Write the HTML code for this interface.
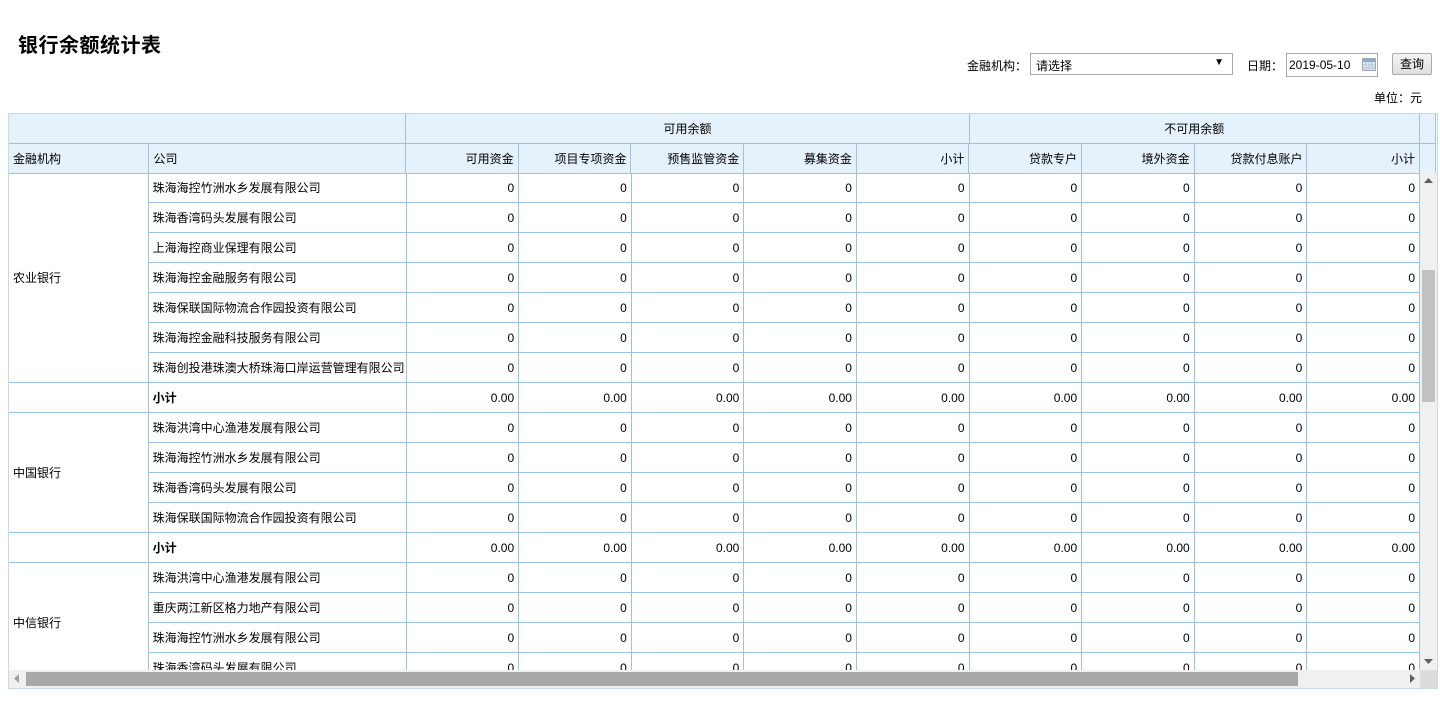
<!DOCTYPE html>
<html><head><meta charset="utf-8"><style>
*{margin:0;padding:0;box-sizing:border-box}
body{width:1440px;height:701px;background:#fff;font-family:"Liberation Sans","Noto Sans CJK SC",sans-serif;font-size:12px;color:#000;position:relative;overflow:hidden}
h1{position:absolute;left:18px;top:29px;font-size:20px;font-weight:bold;letter-spacing:0.5px}
.abs{position:absolute}
.sel{left:1030px;top:53px;width:203px;height:22px;border:1px solid #a9a9a9;padding:3px 5px;font-size:12px}
.sel span{position:absolute;right:8px;top:3px;font-size:10px}
.date{left:1286px;top:53px;width:92px;height:24px;border:1px solid #a9a9a9;padding:4px 2px}
.btn{left:1392px;top:53px;width:40px;height:22px;border:1px solid #adadad;background:linear-gradient(#f4f4f4,#dedede);text-align:center;line-height:20px;border-radius:2px}
.box{left:8px;top:113px;width:1430px;height:576px;border:1px solid #c5dbe8;overflow:hidden}
table{border-collapse:collapse;table-layout:fixed}
td{border:1px solid #9cc2e5;height:30px;padding:0 4px;white-space:nowrap;overflow:hidden}
.hd td{background:#e5f1fb}
.r{text-align:right}
.c{text-align:center}
.body{position:absolute;left:-1px;top:59px;width:1412px;height:497px;overflow:hidden}
.vs{position:absolute;left:1411px;top:59px;width:18px;height:497px;background:#f0f0f0}
.hs{position:absolute;left:0;top:556px;width:1428px;height:18px;background:#f0f0f0}
</style></head><body>
<h1>银行余额统计表</h1>
<div class="abs" style="left:967px;top:57px">金融机构：</div>
<div class="abs sel">请选择<span>▼</span></div>
<div class="abs" style="left:1247px;top:57px">日期：</div>
<div class="abs date">2019-05-10<svg class="abs" style="left:75px;top:4px" width="14" height="13"><rect x="0.5" y="0.5" width="13" height="12" fill="#dfe8f3" stroke="#9ab"/><rect x="1" y="1" width="12" height="3" fill="#8fa8c8"/><path d="M1 7H13M1 10H13M4 4V12M7 4V12M10 4V12" stroke="#b8c6d6"/></svg></div>
<div class="abs btn">查询</div>
<div class="abs" style="left:1374px;top:89px">单位：元</div>
<div class="abs box">
<table class="hd" style="position:absolute;left:-1px;top:-1px">
<colgroup><col style="width:399px"><col style="width:565px"><col style="width:452px"><col style="width:16px"></colgroup>
<tr><td></td><td class="c">可用余额</td><td class="c">不可用余额</td><td></td></tr>
</table>
<table class="hd" style="position:absolute;left:-1px;top:29px">
<colgroup><col style="width:141px"><col style="width:258px"><col style="width:113px"><col style="width:113px"><col style="width:113px"><col style="width:113px"><col style="width:113px"><col style="width:113px"><col style="width:113px"><col style="width:113px"><col style="width:113px"><col style="width:16px"></colgroup>
<tr><td>金融机构</td><td>公司</td><td class="r">可用资金</td><td class="r">项目专项资金</td><td class="r">预售监管资金</td><td class="r">募集资金</td><td class="r">小计</td><td class="r">贷款专户</td><td class="r">境外资金</td><td class="r">贷款付息账户</td><td class="r">小计</td><td></td></tr>
</table>
<div class="body">
<table style="position:absolute;left:0;top:-1px">
<colgroup><col style="width:140px"><col style="width:258px"><col style="width:113px"><col style="width:113px"><col style="width:113px"><col style="width:113px"><col style="width:113px"><col style="width:113px"><col style="width:113px"><col style="width:113px"><col style="width:113px"></colgroup>
<tr><td rowspan="7">农业银行</td><td>珠海海控竹洲水乡发展有限公司</td><td class="r">0</td><td class="r">0</td><td class="r">0</td><td class="r">0</td><td class="r">0</td><td class="r">0</td><td class="r">0</td><td class="r">0</td><td class="r">0</td></tr>
<tr><td>珠海香湾码头发展有限公司</td><td class="r">0</td><td class="r">0</td><td class="r">0</td><td class="r">0</td><td class="r">0</td><td class="r">0</td><td class="r">0</td><td class="r">0</td><td class="r">0</td></tr>
<tr><td>上海海控商业保理有限公司</td><td class="r">0</td><td class="r">0</td><td class="r">0</td><td class="r">0</td><td class="r">0</td><td class="r">0</td><td class="r">0</td><td class="r">0</td><td class="r">0</td></tr>
<tr><td>珠海海控金融服务有限公司</td><td class="r">0</td><td class="r">0</td><td class="r">0</td><td class="r">0</td><td class="r">0</td><td class="r">0</td><td class="r">0</td><td class="r">0</td><td class="r">0</td></tr>
<tr><td>珠海保联国际物流合作园投资有限公司</td><td class="r">0</td><td class="r">0</td><td class="r">0</td><td class="r">0</td><td class="r">0</td><td class="r">0</td><td class="r">0</td><td class="r">0</td><td class="r">0</td></tr>
<tr><td>珠海海控金融科技服务有限公司</td><td class="r">0</td><td class="r">0</td><td class="r">0</td><td class="r">0</td><td class="r">0</td><td class="r">0</td><td class="r">0</td><td class="r">0</td><td class="r">0</td></tr>
<tr><td style="padding-right:0">珠海创投港珠澳大桥珠海口岸运营管理有限公司</td><td class="r">0</td><td class="r">0</td><td class="r">0</td><td class="r">0</td><td class="r">0</td><td class="r">0</td><td class="r">0</td><td class="r">0</td><td class="r">0</td></tr>
<tr><td></td><td><b>小计</b></td><td class="r">0.00</td><td class="r">0.00</td><td class="r">0.00</td><td class="r">0.00</td><td class="r">0.00</td><td class="r">0.00</td><td class="r">0.00</td><td class="r">0.00</td><td class="r">0.00</td></tr>
<tr><td rowspan="4">中国银行</td><td>珠海洪湾中心渔港发展有限公司</td><td class="r">0</td><td class="r">0</td><td class="r">0</td><td class="r">0</td><td class="r">0</td><td class="r">0</td><td class="r">0</td><td class="r">0</td><td class="r">0</td></tr>
<tr><td>珠海海控竹洲水乡发展有限公司</td><td class="r">0</td><td class="r">0</td><td class="r">0</td><td class="r">0</td><td class="r">0</td><td class="r">0</td><td class="r">0</td><td class="r">0</td><td class="r">0</td></tr>
<tr><td>珠海香湾码头发展有限公司</td><td class="r">0</td><td class="r">0</td><td class="r">0</td><td class="r">0</td><td class="r">0</td><td class="r">0</td><td class="r">0</td><td class="r">0</td><td class="r">0</td></tr>
<tr><td>珠海保联国际物流合作园投资有限公司</td><td class="r">0</td><td class="r">0</td><td class="r">0</td><td class="r">0</td><td class="r">0</td><td class="r">0</td><td class="r">0</td><td class="r">0</td><td class="r">0</td></tr>
<tr><td></td><td><b>小计</b></td><td class="r">0.00</td><td class="r">0.00</td><td class="r">0.00</td><td class="r">0.00</td><td class="r">0.00</td><td class="r">0.00</td><td class="r">0.00</td><td class="r">0.00</td><td class="r">0.00</td></tr>
<tr><td rowspan="4">中信银行</td><td>珠海洪湾中心渔港发展有限公司</td><td class="r">0</td><td class="r">0</td><td class="r">0</td><td class="r">0</td><td class="r">0</td><td class="r">0</td><td class="r">0</td><td class="r">0</td><td class="r">0</td></tr>
<tr><td>重庆两江新区格力地产有限公司</td><td class="r">0</td><td class="r">0</td><td class="r">0</td><td class="r">0</td><td class="r">0</td><td class="r">0</td><td class="r">0</td><td class="r">0</td><td class="r">0</td></tr>
<tr><td>珠海海控竹洲水乡发展有限公司</td><td class="r">0</td><td class="r">0</td><td class="r">0</td><td class="r">0</td><td class="r">0</td><td class="r">0</td><td class="r">0</td><td class="r">0</td><td class="r">0</td></tr>
<tr><td>珠海香湾码头发展有限公司</td><td class="r">0</td><td class="r">0</td><td class="r">0</td><td class="r">0</td><td class="r">0</td><td class="r">0</td><td class="r">0</td><td class="r">0</td><td class="r">0</td></tr>
</table>
</div>
<div class="vs">
<svg class="abs" style="left:4px;top:5px" width="9" height="5"><path d="M0 5L4.5 0L9 5Z" fill="#606060"/></svg>
<div class="abs" style="left:2px;top:97px;width:13px;height:132px;background:#c1c1c1"></div>
<svg class="abs" style="left:4px;top:486px" width="9" height="5"><path d="M0 0L4.5 5L9 0Z" fill="#606060"/></svg>
</div>
<div class="hs">
<svg class="abs" style="left:5px;top:4px" width="5" height="9"><path d="M5 0L0 4.5L5 9Z" fill="#a0a0a0"/></svg>
<div class="abs" style="left:17px;top:2px;width:1272px;height:14px;background:#a8a8a8"></div>
<svg class="abs" style="left:1401px;top:4px" width="5" height="9"><path d="M0 0L5 4.5L0 9Z" fill="#606060"/></svg>
<div class="abs" style="left:1411px;top:0;width:17px;height:18px;background:#dcdcdc"></div>
</div>
</div>
</body></html>
